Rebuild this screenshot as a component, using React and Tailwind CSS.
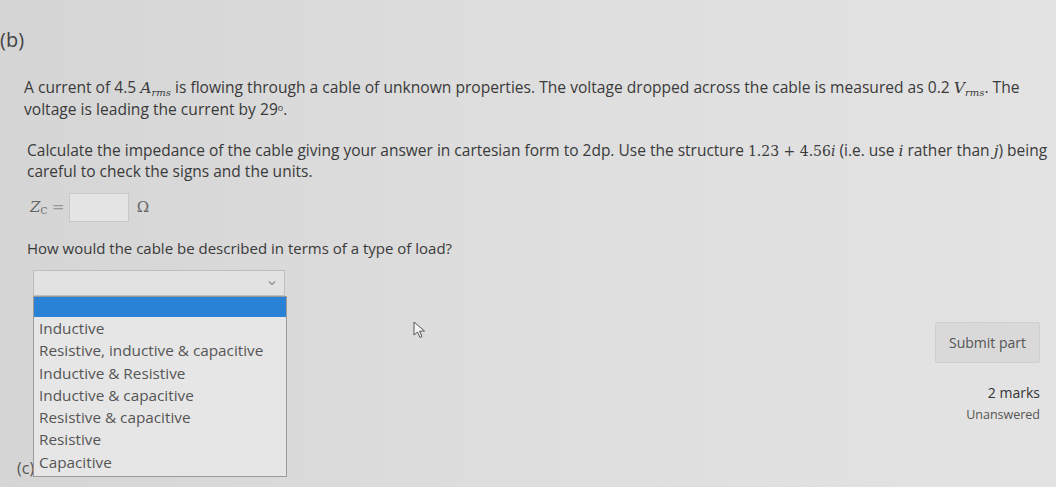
import React from 'react';

const options = [
  'Inductive',
  'Resistive, inductive & capacitive',
  'Inductive & Resistive',
  'Inductive & capacitive',
  'Resistive & capacitive',
  'Resistive',
  'Capacitive',
];

const MathI = ({ children }) => (
  <span className="italic" style={{ fontFamily: '"DejaVu Serif", "Liberation Serif", serif' }}>{children}</span>
);

const Cursor = () => (
  <svg width="16" height="18" viewBox="0 0 16 18" className="absolute left-[412px] top-[321px]">
    <path d="M2 1 L2 14 L5.5 11 L8 16.5 L10 15.5 L7.6 10.2 L12.5 10 Z" fill="#f4f4f4" stroke="#555" strokeWidth="1" strokeLinejoin="round" />
  </svg>
);

export default function App() {
  return (
    <div
      className="relative w-[1056px] h-[487px] overflow-hidden bg-linear-to-r from-[#d5d5d5] via-[#dedede] to-[#e3e3e3] text-[#3a3a3a]"
      style={{ fontFamily: '"Open Sans", "Noto Sans", sans-serif' }}
    >
      <div className="pt-[27px]">
        <div className="text-[20px] leading-[26px] text-[#444]">(b)</div>

        <div className="pl-[24px] mt-[24px] text-[15.6px] leading-[21px]">
          <p className="whitespace-nowrap">
            A current of 4.5 <MathI>A<sub className="text-[10px]">rms</sub></MathI> is flowing through a cable of unknown properties. The voltage dropped across the cable is measured as 0.2 <MathI>V<sub className="text-[10px]">rms</sub></MathI>. The
            <br />
            voltage is leading the current by 29<sup className="text-[9px]">o</sup>.
          </p>

          <div className="pl-[3px]">
            <p className="mt-[20px] leading-[20px] text-[15.5px] whitespace-nowrap">
              Calculate the impedance of the cable giving your answer in cartesian form to 2dp. Use the structure{' '}
              <span style={{ fontFamily: '"DejaVu Serif", serif' }} className="text-[14px]">1.23 + 4.56<i>i</i></span> (i.e. use <MathI>i</MathI> rather than <MathI>j</MathI>) being
              <br />
              careful to check the signs and the units.
            </p>

            <div className="mt-[12px] flex items-center gap-[4px] text-[15px] text-[#666]">
              <span className="pl-[3px]" style={{ fontFamily: '"DejaVu Serif", serif' }}>
                <i>Z</i><sub className="text-[9px]">C</sub> <span className="text-[#999]">=</span>
              </span>
              <div className="w-[60px] h-[29px] border border-[#c8c8c8] bg-[#e4e4e4]" />
              <span className="ml-[4px]" style={{ fontFamily: '"DejaVu Serif", serif' }}>Ω</span>
            </div>

            <p className="mt-[16px] text-[15px]">How would the cable be described in terms of a type of load?</p>

            <div className="relative mt-[11px] ml-[6px] w-[252px] h-[26px] border border-[#bdbdbd] bg-[#e2e2e2] flex items-center justify-end pr-[8px]">
              <svg width="8" height="6" viewBox="0 0 8 6"><path d="M1 1.5 L4 4.5 L7 1.5" fill="none" stroke="#888" strokeWidth="1.2" /></svg>
              <div className="absolute left-[-1px] top-[25px] w-[254px] border border-[#9a9a9a] bg-[#e6e6e6] z-10">
                <div className="h-[20px] bg-[#2a82d6]" />
                <ul className="pl-[5px] pb-[3px] text-[15.3px] leading-[22.3px] text-[#555]">
                  {options.map((o) => <li key={o}>{o}</li>)}
                </ul>
              </div>
            </div>
          </div>
        </div>

        <div className="flex justify-end pr-[16px] mt-[26px]">
          <div className="flex flex-col items-end">
            <button className="w-[105px] h-[41px] border border-[#cfcfcf] bg-[#d9d9d9] text-[14px] text-[#555] rounded-[2px]">Submit part</button>
            <div className="mt-[20px] text-[14px] leading-[20px] text-[#333]">2 marks</div>
            <div className="mt-[3px] text-[12.5px] leading-[18px] text-[#555]">Unanswered</div>
          </div>
        </div>

        <div className="pl-[17px] mt-[32px] text-[16px] text-[#555]">(c)</div>
      </div>
      <Cursor />
    </div>
  );
}
